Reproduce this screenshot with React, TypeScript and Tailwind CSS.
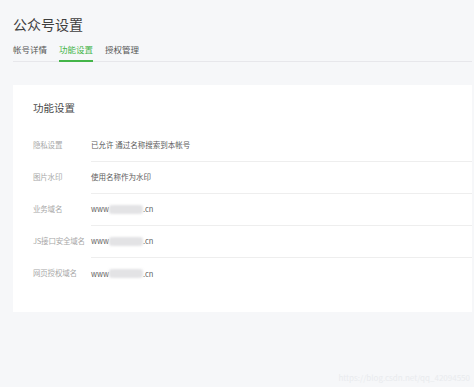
const font = { fontFamily: '"Noto Sans CJK SC", "Noto Sans", sans-serif' };

const rows = [
  { label: "隐私设置", value: "已允许 通过名称搜索到本帐号" },
  { label: "图片水印", value: "使用名称作为水印" },
  { label: "业务域名", domain: true },
  { label: "JS接口安全域名", domain: true },
  { label: "网页授权域名", domain: true },
];

function Domain() {
  return (
    <span className="flex items-center">
      www
      <span className="inline-block w-[34px] h-[9px] rounded-[3px] bg-[#e3e3e5] blur-[1px]" />
      .cn
    </span>
  );
}

export default function App() {
  return (
    <div className="min-h-[387px] bg-[#f6f7f9] pl-[13px] pr-[2px] pt-[14px]" style={font}>
      <h1 className="text-[14px] leading-[20px] text-[#3e3e3e]">公众号设置</h1>

      {/* Tabs */}
      <div className="mt-[6px] flex gap-[12px] border-b border-[#e7e7eb] text-[8.5px] leading-[18px]">
        <span className="pb-[2px] -mb-px border-b-2 border-transparent text-[#555]">帐号详情</span>
        <span className="pb-[2px] -mb-px border-b-2 border-[#44b549] text-[#44b549]">功能设置</span>
        <span className="pb-[2px] -mb-px border-b-2 border-transparent text-[#555]">授权管理</span>
      </div>

      {/* Card */}
      <div className="mt-[23px] bg-white pl-[20px] pt-[15px] pb-[22px]">
        <h2 className="text-[10.5px] leading-[16px] text-[#4a4a4a]">功能设置</h2>
        <div className="mt-[13.5px]">
          {rows.map((row, i) => (
            <div key={row.label} className="flex text-[7.5px]">
              <div className="w-[58px] h-[31px] flex items-center text-[#a8a8a8] whitespace-nowrap tracking-[-0.2px]">
                {row.label}
              </div>
              <div
                className={`flex-1 flex items-center h-[32px] text-[#5c5c5c] ${
                  i < rows.length - 1 ? "border-b border-[#eeeeee]" : ""
                }`}
              >
                {row.domain ? <Domain /> : row.value}
              </div>
            </div>
          ))}
        </div>
      </div>

      <div className="mt-[61px] flex justify-end pr-[2px] text-[8px] leading-[10px] text-[#e9ebee]">
        https://blog.csdn.net/qq_42094550
      </div>
    </div>
  );
}
